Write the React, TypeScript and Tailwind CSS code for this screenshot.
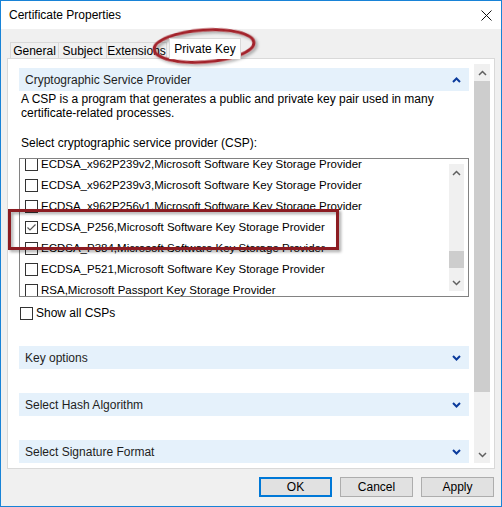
import type { ReactNode } from 'react';

// ---- Small drawings ---------------------------------------------------------

const FONT = { fontFamily: '"Liberation Sans", Arial, sans-serif' };

function Chevron({ up }: { up?: boolean }) {
  return (
    <svg width="9" height="6" viewBox="0 0 9 6" className={up ? '' : 'rotate-180'}>
      <path d="M1 5 L4.5 1.5 L8 5" fill="none" stroke="#0b3b9c" strokeWidth="2" />
    </svg>
  );
}

function ScrollArrow({ up }: { up?: boolean }) {
  return (
    <svg width="9" height="6" viewBox="0 0 9 6" className={up ? '' : 'rotate-180'}>
      <path d="M1 5 L4.5 1.5 L8 5" fill="none" stroke="#606060" strokeWidth="1.5" />
    </svg>
  );
}

function CheckBox({ checked }: { checked?: boolean }) {
  return (
    <span className="flex h-[13px] w-[13px] shrink-0 items-center justify-center border border-[#333] bg-white">
      {checked && (
        <svg width="11" height="11" viewBox="0 0 11 11">
          <path d="M1.5 5.5 L4 8 L9.5 2.5" fill="none" stroke="#555" strokeWidth="1.2" />
        </svg>
      )}
    </span>
  );
}

// ---- Pieces -----------------------------------------------------------------

function SectionHeader({ title, up }: { title: string; up?: boolean }) {
  return (
    <div className="flex h-[23px] items-center justify-between bg-[#e5f1fb] pl-[6px] pr-[8px] text-[12px] text-[#1e1e1e]">
      <span>{title}</span>
      <Chevron up={up} />
    </div>
  );
}

function Tab({ label, width, active }: { label: string; width: string; active?: boolean }) {
  if (active) {
    return (
      <div className={'relative z-10 -mb-px flex h-[21px] items-center justify-center border border-b-0 border-[#d9d9d9] bg-white text-[12px] ' + width}>
        {label}
      </div>
    );
  }
  return (
    <div className={'flex h-[16px] items-center justify-center overflow-hidden whitespace-nowrap border border-r-0 border-b-0 border-[#d9d9d9] text-[12px] ' + width}>
      {label}
    </div>
  );
}

function Button({ children, primary }: { children: ReactNode; primary?: boolean }) {
  return (
    <div
      className={
        'flex h-[20px] w-[73px] items-center justify-center bg-[#e1e1e1] text-[12px] ' +
        (primary ? 'border-2 border-[#0078d7]' : 'border border-[#adadad]')
      }
    >
      {children}
    </div>
  );
}

const PROVIDERS = [
  'ECDSA_x962P239v2,Microsoft Software Key Storage Provider',
  'ECDSA_x962P239v3,Microsoft Software Key Storage Provider',
  'ECDSA_x962P256v1,Microsoft Software Key Storage Provider',
  'ECDSA_P256,Microsoft Software Key Storage Provider',
  'ECDSA_P384,Microsoft Software Key Storage Provider',
  'ECDSA_P521,Microsoft Software Key Storage Provider',
  'RSA,Microsoft Passport Key Storage Provider',
];

function ProviderList() {
  return (
    <div className="flex h-[139px] border border-[#828282] bg-white">
      <div className="flex-1 overflow-hidden">
        {/* list is scrolled a few pixels down */}
        <div className="-mt-[5px] flex flex-col">
          {PROVIDERS.map((p, i) => (
            <div key={i} className="flex h-[21px] shrink-0 items-center gap-[3px] pl-[5px] text-[11.5px]">
              <CheckBox checked={i === 3} />
              <span className="whitespace-nowrap">{p}</span>
            </div>
          ))}
        </div>
      </div>
      {/* inner scrollbar */}
      <div className="my-[5px] mr-[4px] flex w-[15px] flex-col bg-[#f0f0f0]">
        <div className="flex h-[17px] items-center justify-center"><ScrollArrow up /></div>
        <div className="flex-1" />
        <div className="mb-[6px] h-[17px] bg-[#cdcdcd]" />
        <div className="flex h-[17px] items-center justify-center"><ScrollArrow /></div>
      </div>
    </div>
  );
}

// ---- App ----------------------------------------------------------------------

export default function App() {
  return (
    <div style={FONT} className="relative flex h-[507px] w-[502px] flex-col border border-[#1883d7] bg-[#f0f0f0] text-black">
      {/* title bar */}
      <div className="flex h-[28px] shrink-0 items-center justify-between bg-white pl-[8px] pr-[9px] text-[12px]">
        <span>Certificate Properties</span>
        <svg width="11" height="11" viewBox="0 0 11 11">
          <path d="M0.5 0.5 L10.5 10.5 M10.5 0.5 L0.5 10.5" stroke="#111" strokeWidth="1" />
        </svg>
      </div>

      {/* tabs */}
      <div className="flex h-[29px] shrink-0 items-end pl-[9px]">
        <Tab label="General" width="w-[48px]" />
        <Tab label="Subject" width="w-[48px]" />
        <div className="border-r border-[#d9d9d9]">
          <Tab label="Extensions" width="w-[60px]" />
        </div>
        <div className="w-[2px]" />
        <Tab label="Private Key" width="w-[72px]" active />
      </div>

      {/* tab page */}
      <div className="mx-[6px] flex h-[411px] shrink-0 border border-[#d9d9d9] bg-white">
        <div className="flex flex-1 flex-col overflow-hidden pl-[11px] pt-[9px]">
          <SectionHeader title="Cryptographic Service Provider" up />
          <div className="pl-[2px] pt-[1px] text-[12px] leading-[14px]">
            A CSP is a program that generates a public and private key pair used in many
            <br />
            certificate-related processes.
          </div>
          <div className="mt-[16px] pl-[2px] text-[12px] leading-[14px]">
            Select cryptographic service provider (CSP):
          </div>
          <div className="mt-[8px]">
            <ProviderList />
          </div>
          <div className="mt-[7px] flex items-center gap-[3px] pl-[1px] text-[12px]">
            <CheckBox />
            <span>Show all CSPs</span>
          </div>
          <div className="mt-[24px]"><SectionHeader title="Key options" /></div>
          <div className="mt-[24px]"><SectionHeader title="Select Hash Algorithm" /></div>
          <div className="mt-[24px]"><SectionHeader title="Select Signature Format" /></div>
        </div>
        {/* outer scrollbar */}
        <div className="mb-[5px] ml-[5px] mr-[4px] mt-[5px] flex w-[16px] flex-col bg-[#f0f0f0]">
          <div className="flex h-[17px] items-center justify-center"><ScrollArrow up /></div>
          <div className="h-[311px] bg-[#cdcdcd]" />
          <div className="flex-1" />
          <div className="flex h-[17px] items-center justify-center"><ScrollArrow /></div>
        </div>
      </div>

      {/* buttons */}
      <div className="flex flex-1 items-start justify-end gap-[8px] pr-[7px] pt-[8px]">
        <Button primary>OK</Button>
        <Button>Cancel</Button>
        <Button>Apply</Button>
      </div>

      {/* annotations */}
      <svg className="pointer-events-none absolute left-0 top-0" width="502" height="507">
        <defs>
          <filter id="sh" x="-20%" y="-40%" width="140%" height="180%">
            <feDropShadow dx="2" dy="2" stdDeviation="1.5" floodColor="#000" floodOpacity="0.35" />
          </filter>
        </defs>
        <ellipse cx="203" cy="45" rx="50" ry="16" transform="rotate(-4 203 45)" fill="none" stroke="#a3222a" strokeWidth="3" filter="url(#sh)" />
        <rect x="8.5" y="209.5" width="328" height="38" fill="none" stroke="#8c1c22" strokeWidth="3" filter="url(#sh)" />
      </svg>
    </div>
  );
}
